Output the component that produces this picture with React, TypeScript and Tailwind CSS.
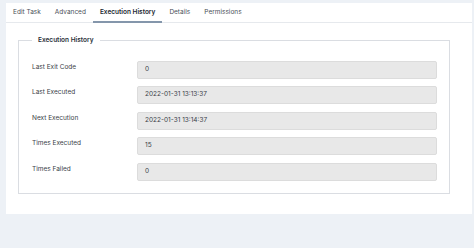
import React from "react";

const tabs = ["Edit Task", "Advanced", "Execution History", "Details", "Permissions"];
const rows: [string, string][] = [
  ["Last Exit Code", "0"],
  ["Last Executed", "2022-01-31 13:13:37"],
  ["Next Execution", "2022-01-31 13:14:37"],
  ["Times Executed", "15"],
  ["Times Failed", "0"],
];

export default function App() {
  return (
    <div
      className="w-[474px] h-[248px] bg-[#edf1f6] pt-[3px] pl-[6px] pr-[2px] overflow-hidden"
      style={{ fontFamily: "Inter, 'Noto Sans', sans-serif" }}
    >
      <div className="bg-white h-[211px] flex flex-col">
        <div className="flex h-[20px] border-b border-[#e6e9ed] items-stretch">
          {tabs.map((t) => {
            const active = t === "Execution History";
            return (
              <div
                key={t}
                className={
                  active
                    ? "px-[7px] pt-[1px] flex items-center text-[6.5px] font-semibold text-[#222831] border-b-2 border-[#8496ab] -mb-px"
                    : "px-[7px] pt-[1px] flex items-center text-[6.5px] text-[#4a5058] -mb-px border-b-2 border-transparent"
                }
              >
                {t}
              </div>
            );
          })}
        </div>
        <div className="pl-[12px] pr-[22px] pt-[13px]">
          <fieldset className="border border-[#dadde2] pl-[13px] pr-[12px] pb-[12px] pt-[15px] m-0">
            <legend className="px-[6px] text-[6.5px] font-semibold text-[#2a3038]">Execution History</legend>
            <div className="flex flex-col">
              {rows.map(([l, v], i) => (
                <div key={l} className={i < rows.length - 1 ? "flex items-start h-[25.5px]" : "flex items-start h-[18px]"}>
                  <div className="w-[105px] shrink-0 text-[6.5px] leading-[13px] text-[#3b4148]">{l}</div>
                  <div className="flex-1 h-[18px] bg-[#e8e8e8] border border-[#dcdcdc] rounded-[2px] flex items-center pl-[7px] text-[6.5px] text-[#3b4148]">
                    {v}
                  </div>
                </div>
              ))}
            </div>
          </fieldset>
        </div>
      </div>
    </div>
  );
}
